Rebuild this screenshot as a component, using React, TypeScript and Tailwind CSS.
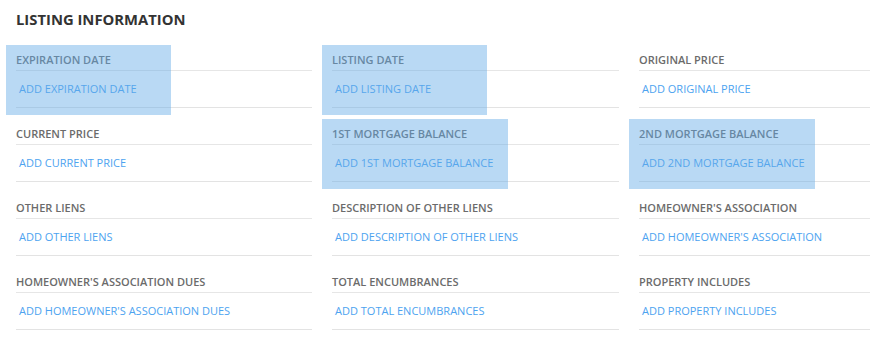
const fields = [
  { label: 'Expiration Date', mark: 'w-[165px]' },
  { label: 'Listing Date', mark: 'w-[165px]' },
  { label: 'Original Price' },
  { label: 'Current Price' },
  { label: '1st Mortgage Balance', mark: 'w-[186px]' },
  { label: '2nd Mortgage Balance', mark: 'w-[186px]' },
  { label: 'Other Liens' },
  { label: 'Description of Other Liens' },
  { label: "Homeowner's Association" },
  { label: "Homeowner's Association Dues" },
  { label: 'Total Encumbrances' },
  { label: 'Property Includes' },
];

export default function App() {
  return (
    <div className="w-[870px] h-[339px] overflow-hidden bg-white font-['Open_Sans',sans-serif] pl-4">
      <h2 className="h-[40px] pt-[8px] text-[14.8px] leading-[22px] font-bold text-[#333] uppercase">
        Listing Information
      </h2>

      <div className="mt-[10px] grid grid-cols-[296px_287px_1fr] gap-x-[20px] gap-y-[16px]">
        {fields.map((f) => (
          <div key={f.label} className="relative">
            <div className="h-[20px] text-[11px] leading-[20px] font-semibold text-[#6b6b6b] uppercase border-b border-[#e6e6e6] box-content">
              {f.label}
            </div>
            <div className="h-[36px] pl-[3px] text-[11px] leading-[36px] text-[#4da3f0] uppercase border-b border-[#e3e3e3] box-content">
              Add {f.label}
            </div>
            {f.mark && (
              <div className={`absolute left-[-10px] top-[-5px] h-[70px] bg-[rgba(100,170,230,0.45)] ${f.mark}`} />
            )}
          </div>
        ))}
      </div>
    </div>
  );
}
